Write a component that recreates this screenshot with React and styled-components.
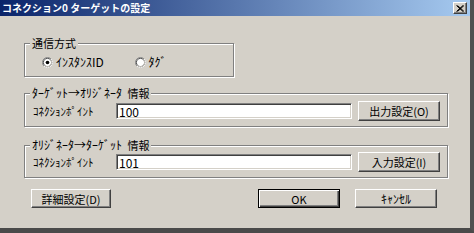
import React from "react";
import styled, { createGlobalStyle } from "styled-components";

const GlobalStyle = createGlobalStyle`
  html, body {
    margin: 0;
    padding: 0;
    background: #d4d0c8;
  }
  body {
    font-family: "Noto Sans CJK JP", "Noto Sans", sans-serif;
    color: #000;
  }
`;

const Window = styled.div`
  box-sizing: border-box;
  width: 474px;
  height: 233px;
  display: flex;
  flex-direction: column;
  background: #d4d0c8;
  border-right: 4px solid #505050;
  border-bottom: 5px solid #4a4a4a;
`;

const TitleBar = styled.div`
  flex: none;
  height: 16px;
  display: flex;
  align-items: center;
  justify-content: space-between;
  padding: 0 3px 0 2px;
  background: linear-gradient(to right, #0a246a, #a6caf0);
`;

const Title = styled.span`
  color: #fff;
  font-size: 10px;
  font-weight: bold;
  line-height: 16px;
  white-space: nowrap;
`;

const CloseButton = styled.div`
  box-sizing: border-box;
  width: 14px;
  height: 12px;
  display: flex;
  align-items: center;
  justify-content: center;
  background: #d4d0c8;
  border: 1px solid;
  border-color: #fff #404040 #404040 #fff;
  box-shadow: inset -1px -1px 0 #808080;
`;

const Body = styled.div`
  flex: 1;
  display: flex;
  flex-direction: column;
  padding: 27px 0 0 24px;
`;

const Group = styled.div`
  box-sizing: border-box;
  width: ${(p) => p.$width}px;
  margin-top: ${(p) => p.$gap || 0}px;
  display: flex;
  flex-direction: column;
  padding: 0 6px 5px 8px;
  border: 1px solid #808080;
  box-shadow: inset 1px 1px 0 #fff, 1px 1px 0 #fff;
`;

const Legend = styled.span`
  align-self: flex-start;
  margin: -7px 0 0 -3px;
  padding: 0 2px;
  font-size: ${(p) => p.$size || 12}px;
  line-height: 12px;
  background: #d4d0c8;
  white-space: nowrap;
`;

const Small = styled.span`
  font-size: 11px;
`;

const RadioRow = styled.div`
  display: flex;
  height: 14px;
  margin: 6px 0 2px;
  padding-left: 9px;
`;

const RadioItem = styled.label`
  width: 100px;
  display: flex;
  align-items: center;
  gap: 3px;
  font-size: 12px;
  line-height: 14px;
`;

const Row = styled.div`
  display: flex;
  align-items: center;
  height: 20px;
  margin-top: ${(p) => p.$gap}px;
`;

const Label = styled.span`
  width: 83px;
  flex: none;
  font-size: 11px;
  white-space: nowrap;
`;

const Field = styled.input`
  box-sizing: border-box;
  width: 236px;
  height: 16px;
  margin: 0 6px 0 0;
  padding: 0 2px;
  font-family: inherit;
  font-size: 12px;
  line-height: 12px;
  background: #fff;
  border: 1px solid;
  border-color: #808080 #fff #fff #808080;
  box-shadow: inset 1px 1px 0 #404040, inset -1px -1px 0 #d4d0c8;
  outline: none;
`;

const Button = styled.button`
  box-sizing: border-box;
  flex: none;
  width: ${(p) => p.$width}px;
  height: ${(p) => p.$height || 20}px;
  padding: 0;
  font-family: inherit;
  font-size: ${(p) => p.$size || 11}px;
  line-height: 12px;
  color: #000;
  background: #d4d0c8;
  border: 1px solid;
  border-color: ${(p) =>
    p.$default ? "#000" : "#fff #404040 #404040 #fff"};
  box-shadow: ${(p) =>
    p.$default
      ? "inset 1px 1px 0 #fff, inset -1px -1px 0 #404040, inset -2px -2px 0 #808080"
      : "inset -1px -1px 0 #808080"};
`;

const Footer = styled.div`
  display: flex;
  align-items: center;
  margin-top: 11px;
  padding: 0 33px 0 7px;
`;

const Spacer = styled.div`
  flex: 1;
`;

const FooterRight = styled.div`
  display: flex;
  gap: 15px;
`;

function Radio({ checked }) {
  return (
    <svg width="11" height="11" viewBox="0 0 12 12">
      <circle cx="6" cy="6" r="5.5" fill="#fff" stroke="#808080" />
      <path d="M9.9 2.1 A5.5 5.5 0 0 1 2.1 9.9" fill="none" stroke="#fff" />
      <circle cx="6" cy="6" r="4.5" fill="none" stroke="#404040" />
      <path d="M9.2 2.8 A4.5 4.5 0 0 1 2.8 9.2" fill="none" stroke="#d4d0c8" />
      {checked && <circle cx="6" cy="6" r="2" fill="#000" />}
    </svg>
  );
}

function CloseIcon() {
  return (
    <svg width="8" height="7" viewBox="0 0 8 7">
      <path
        d="M0.5 0.5 L7 6.5 M1.5 0.5 L8 6.5 M7 0.5 L0.5 6.5 M8 0.5 L1.5 6.5"
        stroke="#000"
        strokeWidth="1"
      />
    </svg>
  );
}

export default function App() {
  return (
    <>
      <GlobalStyle />
      <Window>
        <TitleBar>
          <Title>コネクション0 ターゲットの設定</Title>
          <CloseButton>
            <CloseIcon />
          </CloseButton>
        </TitleBar>
        <Body>
          <Group $width={210}>
            <Legend $size={11}>通信方式</Legend>
            <RadioRow>
              <RadioItem>
                <Radio checked />
                ｲﾝｽﾀﾝｽID
              </RadioItem>
              <RadioItem>
                <Radio />
                ﾀｸﾞ
              </RadioItem>
            </RadioRow>
          </Group>

          <Group $width={424} $gap={16}>
            <Legend>
              ﾀｰｹﾞｯﾄ→ｵﾘｼﾞﾈｰﾀ&nbsp; <Small>情報</Small>
            </Legend>
            <Row $gap={2}>
              <Label>ｺﾈｸｼｮﾝﾎﾟｲﾝﾄ</Label>
              <Field defaultValue="100" />
              <Button $width={82}>出力設定(O)</Button>
            </Row>
          </Group>

          <Group $width={424} $gap={18}>
            <Legend>
              ｵﾘｼﾞﾈｰﾀ→ﾀｰｹﾞｯﾄ&nbsp; <Small>情報</Small>
            </Legend>
            <Row $gap={1}>
              <Label>ｺﾈｸｼｮﾝﾎﾟｲﾝﾄ</Label>
              <Field defaultValue="101" />
              <Button $width={82}>入力設定(I)</Button>
            </Row>
          </Group>

          <Footer>
            <Button $width={80} $height={19}>
              詳細設定(D)
            </Button>
            <Spacer />
            <FooterRight>
              <Button $width={82} $height={19} $default>
                OK
              </Button>
              <Button $width={82} $height={19} $size={12}>
                ｷｬﾝｾﾙ
              </Button>
            </FooterRight>
          </Footer>
        </Body>
      </Window>
    </>
  );
}
